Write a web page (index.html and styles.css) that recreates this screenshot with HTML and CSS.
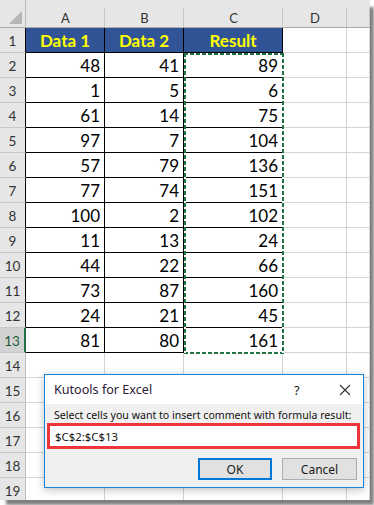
FILE: index.html
```
<!DOCTYPE html>
<html>
<head>
<meta charset="utf-8">
<link rel="stylesheet" href="styles.css">
</head>
<body>
<div class="frame">
  <div class="sheet">
    <div class="corner"><span class="tri"></span></div>
    <div class="ch">A</div><div class="ch">B</div><div class="ch">C</div><div class="ch">D</div><div class="ch"></div>

    <div class="rh rb">1</div><div class="c t hd">Data 1</div><div class="c t hd">Data 2</div><div class="c t hd">Result</div><div class="c"></div><div class="c"></div>
    <div class="rh rb">2</div><div class="c t">48</div><div class="c t">41</div><div class="c t">89</div><div class="c"></div><div class="c"></div>
    <div class="rh rb">3</div><div class="c t">1</div><div class="c t">5</div><div class="c t">6</div><div class="c"></div><div class="c"></div>
    <div class="rh rb">4</div><div class="c t">61</div><div class="c t">14</div><div class="c t">75</div><div class="c"></div><div class="c"></div>
    <div class="rh rb">5</div><div class="c t">97</div><div class="c t">7</div><div class="c t">104</div><div class="c"></div><div class="c"></div>
    <div class="rh rb">6</div><div class="c t">57</div><div class="c t">79</div><div class="c t">136</div><div class="c"></div><div class="c"></div>
    <div class="rh rb">7</div><div class="c t">77</div><div class="c t">74</div><div class="c t">151</div><div class="c"></div><div class="c"></div>
    <div class="rh rb">8</div><div class="c t">100</div><div class="c t">2</div><div class="c t">102</div><div class="c"></div><div class="c"></div>
    <div class="rh rb">9</div><div class="c t">11</div><div class="c t">13</div><div class="c t">24</div><div class="c"></div><div class="c"></div>
    <div class="rh rb">10</div><div class="c t">44</div><div class="c t">22</div><div class="c t">66</div><div class="c"></div><div class="c"></div>
    <div class="rh rb">11</div><div class="c t">73</div><div class="c t">87</div><div class="c t">160</div><div class="c"></div><div class="c"></div>
    <div class="rh rb">12</div><div class="c t">24</div><div class="c t">21</div><div class="c t">45</div><div class="c"></div><div class="c"></div>
    <div class="rh active">13</div><div class="c t">81</div><div class="c t">80</div><div class="c t">161</div><div class="c"></div><div class="c"></div>
    <div class="rh">14</div><div class="c"></div><div class="c"></div><div class="c"></div><div class="c"></div><div class="c"></div>
    <div class="rh">15</div><div class="c"></div><div class="c"></div><div class="c"></div><div class="c"></div><div class="c"></div>
    <div class="rh">16</div><div class="c"></div><div class="c"></div><div class="c"></div><div class="c"></div><div class="c"></div>
    <div class="rh">17</div><div class="c"></div><div class="c"></div><div class="c"></div><div class="c"></div><div class="c"></div>
    <div class="rh">18</div><div class="c"></div><div class="c"></div><div class="c"></div><div class="c"></div><div class="c"></div>
    <div class="rh">19</div><div class="c"></div><div class="c"></div><div class="c"></div><div class="c"></div><div class="c"></div>
  </div>

  <div class="marquee"></div>

  <div class="dialog">
    <div class="titlebar">
      <span class="title">Kutools for Excel</span>
      <span class="help">?</span>
      <span class="close"><svg width="12" height="12" viewBox="0 0 12 12"><path d="M1 1L11 11M11 1L1 11" stroke="#333" stroke-width="1.1" fill="none"/></svg></span>
    </div>
    <div class="dbody">
      <div class="label">Select cells you want to insert comment with formula result:</div>
      <div class="input">$C$2:$C$13</div>
      <div class="buttons">
        <div class="btn ok">OK</div>
        <div class="btn">Cancel</div>
      </div>
    </div>
  </div>
</div>
</body>
</html>
```
FILE: styles.css
```
* { box-sizing: border-box; margin: 0; padding: 0; }
html, body { background: #fff; }
body { width: 374px; height: 505px; overflow: hidden; }

.frame {
  position: relative;
  width: 370px;
  height: 500px;
  overflow: hidden;
  background: #fff;
  box-shadow: 5px 6px 3px -1px rgba(0, 0, 0, 0.5);
}

.sheet {
  display: grid;
  grid-template-columns: 26px 79px 79px 99px 64px 23px;
  grid-template-rows: 28px;
  grid-auto-rows: 25px;
  font-family: Lato, "Liberation Sans", sans-serif;
}

.corner {
  position: relative;
  background: #e6e6e6;
  border-right: 1px solid #bcbcbc;
  border-bottom: 1px solid #a9a9a9;
}
.tri {
  position: absolute;
  right: 3px;
  bottom: 3px;
  width: 0;
  height: 0;
  border-left: 13px solid transparent;
  border-bottom: 13px solid #b5b5b5;
}

.ch {
  background: linear-gradient(#c6c6c6, #c6c6c6) right 8px / 1px calc(100% - 8px) no-repeat, #e6e6e6;
  border-bottom: 1px solid #a9a9a9;
  font-size: 13px;
  color: #333;
  display: flex;
  align-items: center;
  justify-content: center;
  padding-top: 8px;
}

.rh {
  background: #e6e6e6;
  border-right: 1px solid #bcbcbc;
  border-bottom: 1px solid #c8c8c8;
  font-size: 13.5px;
  color: #333;
  display: flex;
  align-items: flex-end;
  justify-content: center;
  padding-bottom: 4px;
  line-height: 13px;
}
.rb { border-right-color: #000; }
.active {
  background: #d2d2d2;
  color: #1f5a3a;
  border-right: 2px solid #217346;
}

.c {
  border-right: 1px solid #d4d4d4;
  border-bottom: 1px solid #d4d4d4;
  font-size: 17px;
  line-height: 17px;
  color: #000;
  display: flex;
  align-items: flex-end;
  justify-content: flex-end;
  padding: 0 4px 3px 0;
}
.t {
  border-right-color: #000;
  border-bottom-color: #000;
}
.hd {
  background: #305496;
  color: #ffff00;
  font-weight: bold;
  justify-content: center;
  padding-right: 0;
}

.marquee {
  position: absolute;
  left: 184px;
  top: 53px;
  width: 100px;
  height: 301px;
  background:
    repeating-linear-gradient(to bottom, #217346 0 4px, #fff 4px 6px) left top / 2px 100% no-repeat,
    repeating-linear-gradient(to bottom, #217346 0 4px, #fff 4px 6px) right top / 2px 100% no-repeat,
    repeating-linear-gradient(to right, #217346 0 4px, #fff 4px 6px) left top / 100% 2px no-repeat,
    repeating-linear-gradient(to right, #217346 0 4px, #fff 4px 6px) left bottom / 100% 2px no-repeat;
}

.dialog {
  position: absolute;
  left: 44px;
  top: 374px;
  width: 320px;
  height: 114px;
  border: 1px solid #1883d7;
  background: #f0f0f0;
  box-shadow: 0 2px 8px rgba(0, 0, 0, 0.25);
  font-family: "Noto Sans", "Open Sans", sans-serif;
  color: #1a1a1a;
}
.titlebar {
  height: 29px;
  background: #fff;
  display: flex;
  align-items: center;
  padding-left: 9px;
}
.title {
  flex: 1;
  font-size: 12.6px;
  color: #2a2038;
}
.help {
  font-size: 13px;
  width: 12px;
  color: #222;
  margin-right: 33px;
}
.close {
  display: flex;
  width: 12px;
  margin-right: 12px;
}
.dbody {
  padding: 4px 3px 0 2px;
}
.label {
  font-size: 10.6px;
  line-height: 15px;
  padding-left: 7px;
  white-space: nowrap;
  color: #111;
}
.input {
  height: 26px;
  border: 3px solid #ef333b;
  background: #fff;
  font-size: 11.4px;
  display: flex;
  align-items: center;
  padding-left: 5px;
  color: #111;
}
.buttons {
  display: flex;
  justify-content: flex-end;
  gap: 10px;
  margin-top: 9px;
  padding-right: 3px;
}
.btn {
  width: 75px;
  height: 22px;
  background: #e1e1e1;
  border: 1px solid #adadad;
  font-size: 12px;
  display: flex;
  align-items: center;
  justify-content: center;
  color: #1a1a1a;
}
.ok {
  width: 74px;
  border: 2px solid #0078d7;
}
```
